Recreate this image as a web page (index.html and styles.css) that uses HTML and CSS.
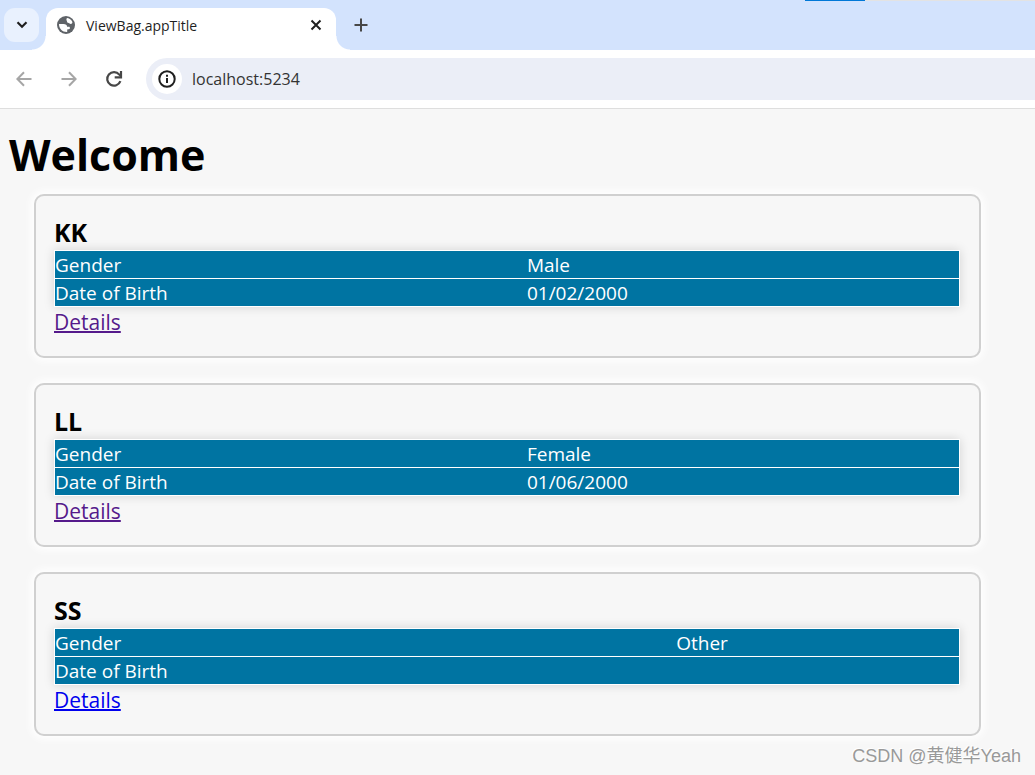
FILE: index.html
```html
<!DOCTYPE html>
<html lang="en">
<head>
<meta charset="utf-8">
<title>ViewBag.appTitle</title>
<link rel="stylesheet" href="styles.css">
</head>
<body>
<header class="browser">
  <div class="tab-strip">
    <button class="tab-search" aria-label="Search tabs">
      <svg width="12" height="8" viewBox="0 0 12 8"><path d="M1.5 1.3 6 5.7l4.500-4.400" fill="none" stroke="#1f1f1f" stroke-width="2.200"/></svg>
    </button>
    <div class="tab">
      <svg class="globe" width="18" height="18" viewBox="0 0 18 18"><circle cx="9" cy="9" r="9" fill="#5f6368"/><path fill="#fff" d="M10 2C11.500 2 14.500 3.500 15.400 6c.1 1.200-.6 1.900-1.800 1.900-.9 0-1.100-.8-1.900-1-1-.2-1.700-.5-1.700-1.500 0-.9-.7-1.200-.6-2 .1-.6.400-1 .6-1.400zM2 8h4.500c2.200 0 3.600.9 3.600 2.700h1.700c.8 0 1.100.5 1.100 1.200 0 1-.7 1.400-1.700 1.400-.9 0-1 .5-1 1.300v1.400C5.500 16.200 2 12.800 2 8z"/></svg>
      <span class="tab-title">ViewBag.appTitle</span>
      <button class="tab-close" aria-label="Close tab">
        <svg width="12" height="12" viewBox="0 0 12 12"><path d="m1.500 1.500 9 9m0-9-9 9" stroke="#1f1f1f" stroke-width="2"/></svg>
      </button>
    </div>
    <button class="new-tab" aria-label="New tab">
      <svg width="14" height="14" viewBox="0 0 14 14"><path d="M7 .5v13M.5 7h13" stroke="#474747" stroke-width="2"/></svg>
    </button>
    <div class="progress"></div>
  </div>
  <div class="toolbar">
    <button class="nav" aria-label="Back">
      <svg width="16" height="16" viewBox="0 0 16 16"><path d="M15.500 8H2M8 1.200 1.400 8 8 14.800" fill="none" stroke="#a6a6a6" stroke-width="2"/></svg>
    </button>
    <button class="nav" aria-label="Forward">
      <svg width="16" height="16" viewBox="0 0 16 16"><path d="M.5 8H14M8 1.200 14.600 8 8 14.800" fill="none" stroke="#a6a6a6" stroke-width="2"/></svg>
    </button>
    <button class="nav" aria-label="Reload">
      <svg width="18" height="18" viewBox="0 0 18 18"><path d="M15.400 11.200A6.800 6.800 0 1 1 14.300 4.600L16 6.300" fill="none" stroke="#474747" stroke-width="2.200"/><path d="M16 1v6.300H9.700" fill="none" stroke="#474747" stroke-width="2.200"/></svg>
    </button>
    <div class="omnibox">
      <button class="site-info" aria-label="View site information">
        <svg width="18" height="18" viewBox="0 0 18 18"><circle cx="9" cy="9" r="7.700" fill="none" stroke="#1f1f1f" stroke-width="2"/><path d="M9 8v5M9 4.800v2" stroke="#1f1f1f" stroke-width="2"/></svg>
      </button>
      <input class="address" type="text" aria-label="Address" value="localhost:5234">
    </div>
  </div>
</header>
<main class="page">
  <h1 class="welcome">Welcome</h1>
  <div class="cards">
    <section class="card">
      <h2 class="name">KK</h2>
      <table class="info">
        <tr><th scope="row">Gender</th><td>Male</td></tr>
        <tr><th scope="row">Date of Birth</th><td>01/02/2000</td></tr>
      </table>
      <a class="details visited" href="#kk">Details</a>
    </section>
    <section class="card">
      <h2 class="name">LL</h2>
      <table class="info">
        <tr><th scope="row">Gender</th><td>Female</td></tr>
        <tr><th scope="row">Date of Birth</th><td>01/06/2000</td></tr>
      </table>
      <a class="details visited" href="#ll">Details</a>
    </section>
    <section class="card">
      <h2 class="name">SS</h2>
      <table class="info undated">
        <tr><th scope="row">Gender</th><td>Other</td></tr>
        <tr><th scope="row">Date of Birth</th><td></td></tr>
      </table>
      <a class="details" href="#ss">Details</a>
    </section>
  </div>
</main>
<div class="watermark">CSDN @黄健华Yeah</div>
</body>
</html>
```

FILE: styles.css
```css
* {
  box-sizing: border-box;
}

body {
  margin: 0;
  min-height: 100vh;
  position: relative;
  background: #f7f7f7;
  color: #000;
  font-family: "Open Sans", "Noto Sans", sans-serif;
}

button {
  display: flex;
  align-items: center;
  justify-content: center;
  padding: 0;
  border: 0;
  background: none;
}

.tab-strip {
  position: relative;
  display: flex;
  height: 50px;
  padding: 8px 0 0 4px;
  background: #d3e3fd;
}

.tab-search {
  width: 35px;
  height: 34px;
  border-radius: 11px;
  background: #e9f1fe;
}

.tab {
  position: relative;
  display: flex;
  align-items: center;
  width: 290px;
  height: 42px;
  margin-left: 7px;
  padding: 0 12px 8px 11px;
  border-radius: 12px 12px 0 0;
  background: #fff;
}

.tab::before,
.tab::after {
  content: "";
  position: absolute;
  bottom: 0;
  width: 14px;
  height: 14px;
}

.tab::before {
  right: 100%;
  background: radial-gradient(circle at 0 0, transparent 13px, #fff 14px);
}

.tab::after {
  left: 100%;
  background: radial-gradient(circle at 100% 0, transparent 13px, #fff 14px);
}

.tab-title {
  flex: 1;
  margin-left: 11px;
  color: #1f1f1f;
  font-size: 14px;
}

.tab-close {
  width: 16px;
  height: 16px;
}

.new-tab {
  width: 34px;
  height: 34px;
  margin-left: 8px;
}

.progress {
  position: absolute;
  top: 0;
  right: 0;
  width: 230px;
  height: 1px;
  background: linear-gradient(to right, #0078d7 60px, #e3e3e3 60px);
}

.toolbar {
  display: flex;
  align-items: center;
  height: 59px;
  border-bottom: 1px solid #dedede;
  padding-left: 1px;
  background: #fff;
}

.nav {
  width: 45px;
  height: 42px;
}

.omnibox {
  display: flex;
  flex: 1;
  align-items: center;
  height: 42px;
  margin-left: 10px;
  padding-left: 6px;
  border-radius: 21px 0 0 21px;
  background: #ebeef7;
}

.site-info {
  width: 30px;
  height: 30px;
  border-radius: 50%;
  background: #fff;
}

.address {
  flex: 1;
  margin-left: 10px;
  padding: 0;
  border: 0;
  outline: 0;
  background: none;
  color: #333;
  font-family: "Open Sans", sans-serif;
  font-size: 16px;
}

.page {
  padding: 16px 54px 39px 34px;
}

.welcome {
  margin: 0 0 9px -25px;
  font-size: 43px;
  font-weight: 700;
  line-height: 60px;
}

.cards {
  display: grid;
  gap: 25px;
}

.card {
  padding: 18px 19px 18px 18px;
  border: 2px solid #d0d0d0;
  border-radius: 10px;
  box-shadow: 0 0 8px 3px #fff;
}

.name {
  margin: 0;
  font-size: 25px;
  font-weight: 700;
  line-height: 36px;
}

.info {
  width: 100%;
  border: 1px solid #fff;
  border-collapse: collapse;
  background: #0074a2;
  box-shadow: 0 0 10px rgba(0, 0, 0, 0.15);
  color: #fff;
  font-size: 19px;
  line-height: 25px;
}

.info tr + tr {
  border-top: 1px solid #fff;
}

.info th,
.info td {
  padding: 2px 0 0;
  font-weight: 400;
  text-align: left;
}

.info th {
  width: 52.2%;
}

.info.undated th {
  width: 68.7%;
}

.details {
  display: block;
  width: fit-content;
  color: #00e;
  font-size: 21px;
  line-height: 31px;
  text-decoration-thickness: 2px;
}

.visited {
  color: #551a8b;
}

.watermark {
  position: absolute;
  right: 14px;
  bottom: 5px;
  color: #999;
  font-family: "Liberation Sans", "Noto Sans CJK SC", sans-serif;
  font-size: 18px;
  line-height: 28px;
  text-shadow: -1px -1px 0 #fff;
}
```
